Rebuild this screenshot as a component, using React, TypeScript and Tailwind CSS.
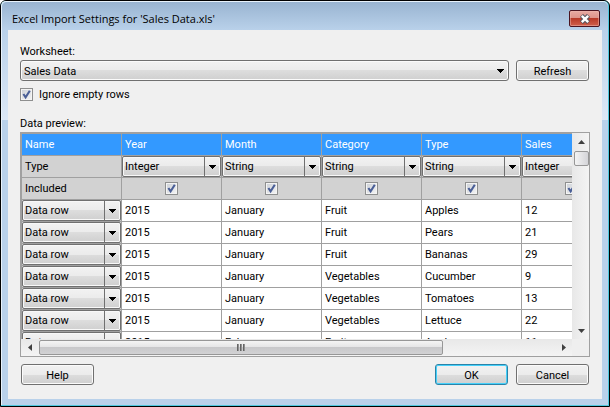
import { useState } from "react";

type Column = { name: string; type: string };

const columns: Column[] = [
  { name: "Year", type: "Integer" },
  { name: "Month", type: "String" },
  { name: "Category", type: "String" },
  { name: "Type", type: "String" },
  { name: "Sales", type: "Integer" },
];

const rows: string[][] = [
  ["2015", "January", "Fruit", "Apples", "12"],
  ["2015", "January", "Fruit", "Pears", "21"],
  ["2015", "January", "Fruit", "Bananas", "29"],
  ["2015", "January", "Vegetables", "Cucumber", "9"],
  ["2015", "January", "Vegetables", "Tomatoes", "13"],
  ["2015", "January", "Vegetables", "Lettuce", "22"],
  ["2015", "February", "Fruit", "Apples", "11"],
];

const typeOptions = ["Integer", "String", "Real", "Date", "Boolean"];
const rowOptions = ["Data row", "Name row", "Type row", "Ignore"];

// glossy two-tone face shared by buttons and combo boxes
const face = "bg-[linear-gradient(#f2f2f2,#ebebeb_50%,#dddddd_50%,#cfcfcf)]";

function Arrow() {
  return (
    <svg viewBox="0 0 7 4" className="h-[4px] w-[7px]" shapeRendering="crispEdges" aria-hidden="true">
      <path d="M0 0h7v1H6v1H5v1H4v1H3V3H2V2H1V1H0z" fill="#000" />
    </svg>
  );
}

function PushButton({ label, primary = false }: { label: string; primary?: boolean }) {
  return (
    <button
      type="button"
      className={`h-[21px] w-[73px] rounded-[3px] border pt-px leading-none ${face} ${
        primary ? "border-[#2a83a8] shadow-[inset_0_0_0_1px_#45d0fa]" : "border-[#707070] shadow-[inset_0_0_0_1px_#fbfbfb]"
      }`}
    >
      {label}
    </button>
  );
}

function Check({ label, id }: { label: string; id: string }) {
  const [on, setOn] = useState(true);
  return (
    <span className="grid size-[13px] shrink-0">
      <input
        id={id}
        type="checkbox"
        aria-label={label}
        checked={on}
        onChange={() => setOn(!on)}
        className="col-start-1 row-start-1 size-[13px] appearance-none border border-[#8e8f8f] bg-linear-to-br from-[#cbcfd5] to-[#f6f6f6] shadow-[inset_0_0_0_1px_#f4f4f4]"
      />
      {on && (
        <svg viewBox="0 0 13 13" className="pointer-events-none col-start-1 row-start-1 size-[13px]" aria-hidden="true">
          <path d="M3.4 6L5.6 9.4L9.8 2.8" fill="none" stroke="#4a5f97" strokeWidth="2.1" />
        </svg>
      )}
    </span>
  );
}

function GridSelect({ label, value, options }: { label: string; value: string; options: string[] }) {
  return (
    <div className="grid h-[21px] grid-cols-[1fr_17px] bg-[#d2d2d2]">
      <select
        aria-label={label}
        defaultValue={value}
        className={`col-span-2 col-start-1 row-start-1 h-[21px] appearance-none rounded-[2px] border border-[#707070] pl-[2px] leading-none shadow-[inset_0_0_0_1px_#f8f8f8] ${face}`}
      >
        {options.map((o) => (
          <option key={o}>{o}</option>
        ))}
      </select>
      <span className="pointer-events-none col-start-2 row-start-1 flex items-center justify-center border-l border-[#707070] pr-px">
        <Arrow />
      </span>
    </div>
  );
}

function PreviewTable() {
  const cell = "h-[22px] border-r border-b border-[#a0a0a0] text-left font-normal";
  const control = `${cell} p-0`;
  const text = `${cell} py-0 pr-0 pl-[3px]`;
  return (
    <table className="w-[600px] table-fixed border-separate border-spacing-0">
      <thead>
        <tr className="bg-[#3399ff] text-white">
          <th className={text}>Name</th>
          {columns.map((c) => (
            <th key={c.name} className={text}>{c.name}</th>
          ))}
        </tr>
      </thead>
      <tbody>
        <tr className="bg-[#d2d2d2]">
          <th className={text}>Type</th>
          {columns.map((c) => (
            <td key={c.name} className={control}>
              <GridSelect label={`${c.name} type`} value={c.type} options={typeOptions} />
            </td>
          ))}
        </tr>
        <tr className="bg-[#d2d2d2]">
          <th className={text}>Included</th>
          {columns.map((c) => (
            <td key={c.name} className={control}>
              <div className="flex justify-center">
                <Check id={`include-${c.name}`} label={`Include ${c.name}`} />
              </div>
            </td>
          ))}
        </tr>
        {rows.map((row, i) => (
          <tr key={i} className="bg-white">
            <td className={control}>
              <GridSelect label={`Row ${i + 1} kind`} value="Data row" options={rowOptions} />
            </td>
            {row.map((value, j) => (
              <td key={j} className={text}>{value}</td>
            ))}
          </tr>
        ))}
      </tbody>
    </table>
  );
}

function VerticalScroll() {
  return (
    <div className="flex w-[17px] shrink-0 flex-col items-center bg-linear-to-r from-[#e8e8e8] to-[#f4f4f4] pl-px">
      <button type="button" aria-label="Scroll up" className="flex h-[18px] w-full items-center justify-center">
        <svg viewBox="0 0 7 4" className="h-[4px] w-[7px]" aria-hidden="true"><path d="M3.5 0L7 4H0z" fill="#404040" /></svg>
      </button>
      <div className="h-[15px] w-[15px] rounded-[2px] border border-[#979797] bg-linear-to-r from-[#f4f4f4] to-[#d4d4d8]" />
      <div className="flex-1" />
      <button type="button" aria-label="Scroll down" className="flex h-[17px] w-full items-center justify-center">
        <svg viewBox="0 0 7 4" className="h-[4px] w-[7px]" aria-hidden="true"><path d="M0 0H7L3.5 4z" fill="#404040" /></svg>
      </button>
    </div>
  );
}

function HorizontalScroll() {
  return (
    <div className="flex h-[17px]">
      <div className="flex flex-1 items-center bg-linear-to-b from-[#e8e8e8] to-[#f4f4f4]">
        <button type="button" aria-label="Scroll left" className="flex h-full w-[18px] items-center justify-center">
          <svg viewBox="0 0 4 7" className="h-[7px] w-[4px]" aria-hidden="true"><path d="M4 0V7L0 3.5z" fill="#404040" /></svg>
        </button>
        <div className="flex h-[15px] w-[404px] items-center justify-center gap-px rounded-[2px] border border-[#979797] bg-[linear-gradient(#f4f4f4,#e4e4e5_50%,#c8c8ca_50%,#d2d2d4)]">
          <span className="h-[7px] w-[2px] bg-linear-to-r from-[#505050] to-[#a8a8a8]" />
          <span className="h-[7px] w-[2px] bg-linear-to-r from-[#505050] to-[#a8a8a8]" />
          <span className="h-[7px] w-[2px] bg-linear-to-r from-[#505050] to-[#a8a8a8]" />
        </div>
        <div className="flex-1" />
        <button type="button" aria-label="Scroll right" className="flex h-full w-[17px] items-center justify-center">
          <svg viewBox="0 0 4 7" className="h-[7px] w-[4px]" aria-hidden="true"><path d="M0 0V7L4 3.5z" fill="#404040" /></svg>
        </button>
      </div>
      <div className="w-[17px] shrink-0 bg-[#efefef]" />
    </div>
  );
}

export default function App() {
  return (
    <div className="bg-white font-['Roboto','Liberation_Sans',sans-serif] text-[11px] leading-[16px] text-black">
      <div className="rounded-t-[6px] border border-black bg-[#4fc8de] pr-px pb-px">
        <div className="rounded-t-[5px] border-t border-l border-[#e8f2fb] bg-[linear-gradient(#b9d1ea_28px,#dce8f6_118px,#b9d1ea_118px)] px-[6px] pb-[6px]">
          <header className="-mx-[6px] flex h-[28px] items-center justify-between rounded-t-[5px] bg-linear-to-b from-[#99b4d1] to-[#b9d1ea] pt-[5px] pr-[8px] pl-[10px]">
            <h1 className="font-['Open_Sans',sans-serif] text-[11px] font-normal">Excel Import Settings for 'Sales Data.xls'</h1>
            <button
              type="button"
              aria-label="Close"
              className="flex h-[17px] w-[31px] items-center justify-center rounded-[2px] border border-[#4a1420] bg-[linear-gradient(#e8aaa2,#dc9288_50%,#b83a28_50%,#d0604c)] shadow-[inset_0_0_0_1px_#eeb8b080]"
            >
              <svg viewBox="0 0 12 10" className="h-[10px] w-[12px]" aria-hidden="true">
                <path d="M2.5 1.5L9.5 8.5M9.5 1.5L2.5 8.5" stroke="#53555f" strokeWidth="4.4" />
                <path d="M2.8 1.8L9.2 8.2M9.2 1.8L2.8 8.2" stroke="#fff" strokeWidth="2.4" />
              </svg>
            </button>
          </header>
          <main className="bg-[#f0f0f0] px-[12px] pt-[14px] pb-[14px]">
            <label htmlFor="worksheet" className="block">Worksheet:</label>
            <div className="flex gap-[7px] pr-px">
              <div className="grid flex-1 grid-cols-[1fr_17px]">
                <select
                  id="worksheet"
                  defaultValue="Sales Data"
                  className={`col-span-2 col-start-1 row-start-1 h-[21px] appearance-none rounded-[3px] border border-[#707070] pt-px pl-[3px] leading-none shadow-[inset_0_0_0_1px_#fbfbfb] ${face}`}
                >
                  <option>Sales Data</option>
                </select>
                <span className="pointer-events-none col-start-2 row-start-1 flex items-center justify-center">
                  <Arrow />
                </span>
              </div>
              <PushButton label="Refresh" />
            </div>
            <div className="mt-[5px] flex h-[16px] items-center gap-[6px]">
              <Check id="ignore-empty" label="Ignore empty rows" />
              <label htmlFor="ignore-empty" className="pt-[2px]">Ignore empty rows</label>
            </div>
            <p className="mt-[14px]">Data preview:</p>
            <section className="border border-[#a0a0a0] bg-[#f0f0f0]">
              <div className="flex h-[206px]">
                <div className="min-w-0 flex-1 overflow-hidden border-t border-l border-[#a0a0a0] bg-white">
                  <PreviewTable />
                </div>
                <VerticalScroll />
              </div>
              <HorizontalScroll />
            </section>
            <footer className="mt-[7px] flex gap-[8px] pr-px pl-px">
              <PushButton label="Help" />
              <div className="flex-1" />
              <PushButton label="OK" primary />
              <PushButton label="Cancel" />
            </footer>
          </main>
        </div>
      </div>
    </div>
  );
}
